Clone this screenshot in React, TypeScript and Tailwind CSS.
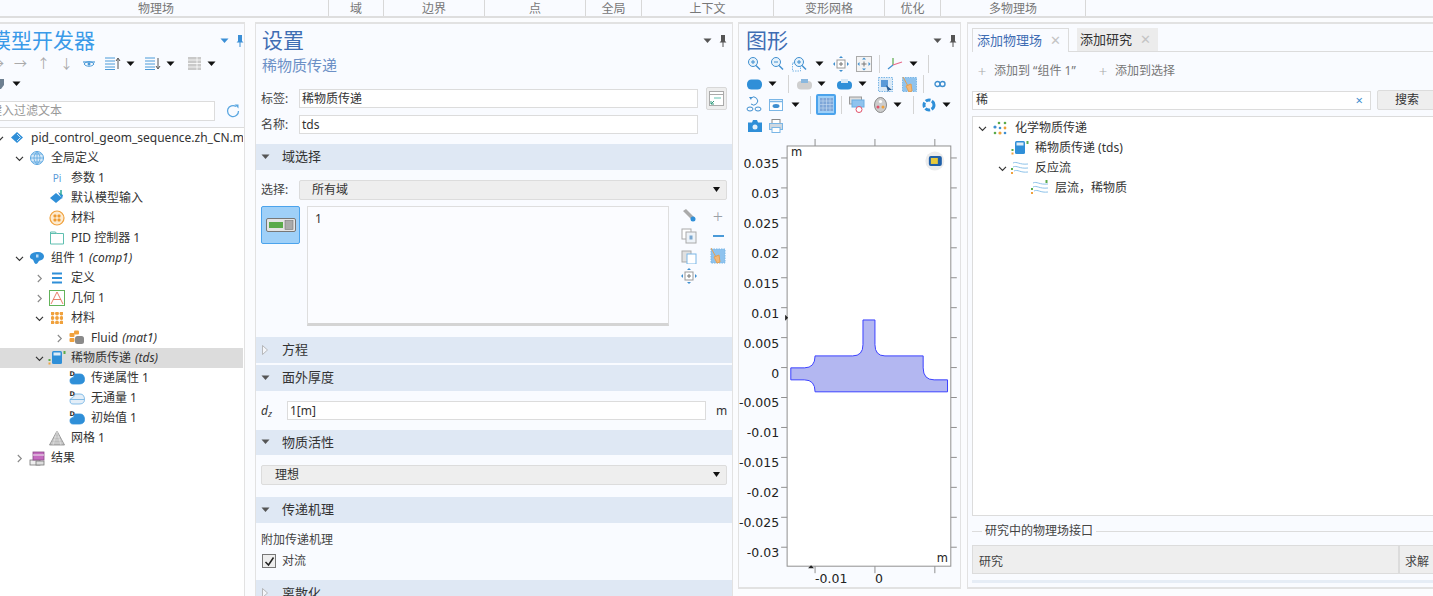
import type { ReactNode } from "react";

const font = "font-['Noto_Sans','Noto_Sans_CJK_SC',sans-serif]";

const ribbon = [
  { label: "物理场", w: "w-[329px]", extra: "pr-4" },
  { label: "域", w: "w-[55px]", extra: "" },
  { label: "边界", w: "w-[101px]", extra: "" },
  { label: "点", w: "w-[101px]", extra: "" },
  { label: "全局", w: "w-[56px]", extra: "" },
  { label: "上下文", w: "w-[132px]", extra: "" },
  { label: "变形网格", w: "w-[111px]", extra: "" },
  { label: "优化", w: "w-[56px]", extra: "" },
  { label: "多物理场", w: "w-[145px]", extra: "" },
];

function Svg({ children, w = 16, h = 16, vb = "0 0 16 16" }: { children: ReactNode; w?: number; h?: number; vb?: string }) {
  return (
    <svg width={w} height={h} viewBox={vb} fill="none" className="shrink-0">
      {children}
    </svg>
  );
}

const Arrow = () => (
  <Svg w={9} h={6} vb="0 0 9 6">
    <path d="M0.5 0.5h8L4.5 5z" fill="#111" />
  </Svg>
);

const PanelMenu = ({ blue }: { blue?: boolean }) => (
  <div className="flex items-center gap-[7px]">
    <Svg w={9} h={6} vb="0 0 9 6">
      <path d="M0.5 0.5h8L4.5 5z" fill={blue ? "#3b8fd6" : "#555"} />
    </Svg>
    <Svg w={8} h={12} vb="0 0 8 12">
      <path d="M2 0h4v6l1.5 1.5h-7L2 6zM3.5 7.5h1V12h-1z" fill={blue ? "#3b8fd6" : "#555"} />
    </Svg>
  </div>
);

const Chevron = ({ open }: { open?: boolean }) => (
  <Svg w={9} h={9} vb="0 0 9 9">
    {open ? (
      <path d="M1 2.8l3.5 3.5L8 2.8" stroke="#333" strokeWidth="1.2" />
    ) : (
      <path d="M2.8 1l3.5 3.5L2.8 8" stroke="#888" strokeWidth="1.1" />
    )}
  </Svg>
);

const DBlob = ({ hollow }: { hollow?: boolean }) => (
  <Svg>
    <path
      d="M6 4h5c3 0 4.500 2 4.500 5.500S13 14 10 14H4C2 14 1 13 1 10.500 1 8 3 8 4 7.500 5 7 5 5 6 4z"
      fill={hollow ? "#e3eef8" : "#2f8fd8"}
      stroke={hollow ? "#6aaee2" : "#2f8fd8"}
      strokeWidth="0.800"
    />
    {hollow && <path d="M1 9.500h14.500" stroke="#6aaee2" strokeWidth="0.800" />}
    <text x="0.500" y="5.500" fontSize="6.500" fontWeight="700" fill="#333" fontFamily="DejaVu Sans, sans-serif">
      D
    </text>
  </Svg>
);

const Dots = ({ small }: { small?: boolean }) => (
  <Svg w={small ? 12 : 16} h={small ? 12 : 16} vb="0 0 12 12">
    {[1.5, 6, 10.5].flatMap((x) => [1.5, 6, 10.5].map((y) => <circle key={`${x}-${y}`} cx={x} cy={y} r="1.900" fill="#f0a13c" />))}
  </Svg>
);

const Chem = () => (
  <Svg w={14} h={14} vb="0 0 14 14">
    <circle cx="2" cy="6" r="1.600" fill="#3f8fd0" />
    <circle cx="6" cy="2" r="1.300" fill="#5aaa4a" />
    <circle cx="12" cy="2" r="1.300" fill="#5aaa4a" />
    <circle cx="7" cy="7" r="1.300" fill="#3f8fd0" />
    <circle cx="12" cy="7" r="1.400" fill="#f0a13c" />
    <circle cx="2" cy="12" r="1.300" fill="#5aaa4a" />
    <circle cx="7" cy="12" r="1.600" fill="#f0a13c" />
    <circle cx="12" cy="12" r="1.300" fill="#3f8fd0" />
  </Svg>
);

const Tds = () => (
  <Svg w={18} h={16} vb="0 0 18 16">
    <rect x="4" y="1" width="10" height="13" rx="1.500" fill="#2f8fd8" />
    <rect x="5.500" y="2.500" width="7" height="3" fill="#dcecf8" />
    <rect x="15.500" y="1" width="2" height="3" fill="#5aaa4a" />
    <rect x="0.500" y="9" width="2" height="2" fill="#5aaa4a" />
    <rect x="0.500" y="12.500" width="2" height="2" fill="#f0a13c" />
  </Svg>
);

const Waves = ({ plus }: { plus?: boolean }) => (
  <Svg w={18} h={16} vb="0 0 18 16">
    <path d="M2 3c4-2 6 2 15 1M2 7c4-2 6 2 15 1M3 11c4-2 6 2 14 1" stroke="#8ec3ea" strokeWidth="1" />
    {plus && <rect x="14.500" y="0" width="2" height="3" fill="#5aaa4a" />}
    <rect x="0" y="8" width="2" height="2" fill="#5aaa4a" />
    <rect x="0" y="12" width="2" height="2" fill="#f0a13c" />
  </Svg>
);

const treeIcons: Record<string, ReactNode> = {
  model: (
    <Svg>
      <path d="M8 2l6 5.500L8 13 2 7.500z" fill="#2f8fd8" />
      <path d="M8 4l3.500 3.500L8 11" stroke="#cfe5f6" strokeWidth="1" />
    </Svg>
  ),
  globe: (
    <Svg>
      <circle cx="8" cy="8" r="6.500" fill="#d6e9f8" stroke="#5aa6e0" />
      <path d="M1.500 8h13M8 1.500v13M3 4h10M3 12h10M8 1.500c-4 4-4 9 0 13M8 1.500c4 4 4 9 0 13" stroke="#5aa6e0" strokeWidth="0.8" />
    </Svg>
  ),
  pi: <span className="text-[10px] leading-none text-[#5a9ad8]">Pi</span>,
  input: (
    <Svg>
      <path d="M7 3l6 5-6 5-6-5z" fill="#2f8fd8" />
      <path d="M9 2l5 3-1 4" fill="#2f8fd8" />
      <path d="M12 0v5" stroke="#2aa89a" strokeWidth="1.500" />
    </Svg>
  ),
  mat: (
    <Svg>
      <circle cx="8" cy="8" r="7" fill="#fdebd0" stroke="#f0a13c" strokeWidth="1.200" />
      <g fill="#ee9a30">
        <rect x="4.500" y="4.500" width="3" height="3" rx="1" />
        <rect x="8.500" y="4.500" width="3" height="3" rx="1" />
        <rect x="4.500" y="8.500" width="3" height="3" rx="1" />
        <rect x="8.500" y="8.500" width="3" height="3" rx="1" />
      </g>
    </Svg>
  ),
  pid: (
    <Svg>
      <path d="M1.500 14V2h5l1 1.500h7V14z" fill="#fff" stroke="#5fbfb0" />
      <path d="M1.500 3.500h6" stroke="#5fbfb0" />
    </Svg>
  ),
  comp: (
    <Svg>
      <path d="M1 6c1-3 4-4 8-4 4 0 6 2 6 4.500S13 10 11 10.500 9 14 7 14c-2 0-2-4-3.500-4.500S0.500 8 1 6z" fill="#2f8fd8" />
      <rect x="7" y="4.500" width="2.500" height="3" fill="#bcdcf5" />
    </Svg>
  ),
  defs: (
    <Svg>
      <path d="M3 3.500h10M3 8h10M3 12.500h10" stroke="#2f8fd8" strokeWidth="1.900" />
    </Svg>
  ),
  geom: (
    <Svg>
      <rect x="0.500" y="0.500" width="15" height="15" fill="#fff" stroke="#62b35a" />
      <path d="M2 14l3-6 3-6 3 6 3 6M4 9.500h8" stroke="#e8705a" strokeWidth="0.900" />
    </Svg>
  ),
  mats: <Dots small />,
  fluid: (
    <Svg>
      <g fill="#f0a13c">
        <rect x="5" y="0.500" width="5" height="4" rx="1" />
        <rect x="0.500" y="3" width="5" height="4" rx="1" />
        <rect x="0.500" y="8" width="5" height="4" rx="1" />
      </g>
      <rect x="6" y="6" width="9" height="8" rx="2.500" fill="#8a8a8a" />
    </Svg>
  ),
  tds: <Tds />,
  d: <DBlob />,
  dh: <DBlob hollow />,
  mesh: (
    <Svg>
      <path d="M8 1l7.500 14H0.500z" fill="#bdbdbd" stroke="#8a8a8a" strokeWidth="0.800" />
      <path d="M5 7h6M3.500 10h9M2 13h12M8 1L4 15M8 1l4 14" stroke="#eee" strokeWidth="0.500" />
    </Svg>
  ),
  res: (
    <Svg w={16} h={15} vb="0 0 16 15">
      <rect x="1" y="9" width="10" height="5" fill="#eee" stroke="#777" strokeWidth="0.800" />
      <rect x="4" y="1" width="11" height="8" fill="#c56ac0" stroke="#8a4a88" strokeWidth="0.800" />
      <path d="M4 4h11" stroke="#eee" />
      <rect x="7" y="10" width="8" height="4" fill="#ddd" stroke="#777" strokeWidth="0.800" />
    </Svg>
  ),
};

const tree = [
  { level: 0, chev: "open", icon: "model", text: "pid_control_geom_sequence.zh_CN.mph" },
  { level: 1, chev: "open", icon: "globe", text: "全局定义" },
  { level: 2, icon: "pi", text: "参数 1" },
  { level: 2, icon: "input", text: "默认模型输入" },
  { level: 2, icon: "mat", text: "材料" },
  { level: 2, icon: "pid", text: "PID 控制器 1" },
  { level: 1, chev: "open", icon: "comp", text: "组件 1", em: "(comp1)" },
  { level: 2, chev: "closed", icon: "defs", text: "定义" },
  { level: 2, chev: "closed", icon: "geom", text: "几何 1" },
  { level: 2, chev: "open", icon: "mats", text: "材料" },
  { level: 3, chev: "closed", icon: "fluid", text: "Fluid", em: "(mat1)" },
  { level: 2, chev: "open", icon: "tds", text: "稀物质传递", em: "(tds)", selected: true },
  { level: 3, icon: "d", text: "传递属性 1" },
  { level: 3, icon: "dh", text: "无通量 1" },
  { level: 3, icon: "d", text: "初始值 1" },
  { level: 2, icon: "mesh", text: "网格 1" },
  { level: 1, chev: "closed", icon: "res", text: "结果" },
];

const indent = ["pl-0", "pl-[20px]", "pl-[40px]", "pl-[60px]"];

function TreeRow({ row }: { row: (typeof tree)[number] }) {
  return (
    <div className={`flex h-[20px] items-center whitespace-nowrap ${indent[row.level]} ${row.selected ? "bg-[#dcdcdc]" : ""}`}>
      <div className="flex w-[14px] shrink-0 justify-center">{row.chev && <Chevron open={row.chev === "open"} />}</div>
      <div className="flex w-[22px] shrink-0 justify-center">{treeIcons[row.icon]}</div>
      <span className="ml-[3px] text-[12px] text-[#333]">
        {row.text}
        {row.em && <em className="ml-[4px]">{row.em}</em>}
      </span>
    </div>
  );
}

function LeftToolbar() {
  return (
    <div className="text-[#aaaaaa]">
      <div className="flex h-[21px] items-center">
        <span className="ml-[-9px] w-[23px] shrink-0 text-[13px] leading-none">→</span>
        <span className="w-[23px] shrink-0 text-[13px] leading-none">→</span>
        <span className="w-[23px] shrink-0 text-[13px] leading-none">↑</span>
        <span className="w-[23px] shrink-0 text-[13px] leading-none">↓</span>
        <div className="w-[22px] shrink-0">
          <Svg w={12} h={10} vb="0 0 12 10">
            <path d="M0 3h12" stroke="#4a9ad8" strokeWidth="1.200" />
            <path d="M1 5c2-3 8-3 10 0-2 3-8 3-10 0z" stroke="#4a9ad8" />
            <circle cx="6" cy="5" r="1.500" fill="#4a9ad8" />
          </Svg>
        </div>
        <div className="flex w-[40px] shrink-0 items-center gap-[5px]">
          <ListIcon up />
          <Arrow />
        </div>
        <div className="flex w-[43px] shrink-0 items-center gap-[5px]">
          <ListIcon />
          <Arrow />
        </div>
        <div className="flex items-center gap-[5px]">
          <Svg w={14} h={13} vb="0 0 14 13">
            <path d="M0 0h13v13H0z" fill="#c9c9c9" />
            <path d="M0 3h13M0 6.500h13M0 10h13M9 0v13" stroke="#fff" strokeWidth="0.800" />
          </Svg>
          <Arrow />
        </div>
      </div>
      <div className="flex h-[20px] items-center gap-[7px]">
        <Svg w={5} h={12} vb="0 0 5 12">
          <path d="M0 1h4v6L1 11H0z" fill="#6d7f90" />
        </Svg>
        <Arrow />
      </div>
    </div>
  );
}

function ListIcon({ up }: { up?: boolean }) {
  return (
    <Svg w={16} h={13} vb="0 0 16 13">
      <path d="M0 1h10M0 4h10M0 7h10M0 10h10M0 12.500h10" stroke="#4a9ad8" strokeWidth="1" />
      <path d={up ? "M13 12V2M11 4l2-3 2 3" : "M13 1v10M11 9l2 3 2-3"} stroke="#555" />
    </Svg>
  );
}

function Section({ title, open = true, cut }: { title: string; open?: boolean; cut?: boolean }) {
  return (
    <div className={`flex ${cut ? "h-[16px] items-start" : "h-[26px] items-center"} bg-[#dfe8f4] text-[13px] text-[#333]`}>
      <div className={`flex w-[26px] justify-center pr-[8px] ${cut ? "mt-[8px]" : ""}`}>
        {open ? (
          <Svg w={9} h={6} vb="0 0 9 6">
            <path d="M0.500 0.500h8L4.500 5z" fill="#555" />
          </Svg>
        ) : (
          <Svg w={6} h={10} vb="0 0 6 10">
            <path d="M0.500 0.500l5 4.500-5 4.500z" fill="#f4f6fa" stroke="#aaa" strokeWidth="0.800" />
          </Svg>
        )}
      </div>
      <span className={cut ? "mt-[4px]" : ""}>{title}</span>
    </div>
  );
}

function Field({ value, className }: { value: string; className: string }) {
  return (
    <div className={`flex shrink-0 items-center border border-[#dcdcdc] bg-white px-[2px] text-[12px] text-[#333] ${className}`}>{value}</div>
  );
}

function Select({ value, className }: { value: string; className: string }) {
  return (
    <div className={`flex h-[20px] shrink-0 items-center justify-between rounded-[2px] border border-[#dcdcdc] bg-[#eeeeee] pr-[6px] text-[12px] text-[#333] ${className}`}>
      <span>{value}</span>
      <Svg w={7} h={5} vb="0 0 7 5">
        <path d="M0 0h7L3.500 5z" fill="#111" />
      </Svg>
    </div>
  );
}

function SettingsPanel() {
  return (
    <div className="flex h-[574px] w-[478px] shrink-0 flex-col overflow-hidden border-x border-t-2 border-[#e2e2e2] bg-[#f9fbff]">
      <div className="flex items-start justify-between pl-[6px] pr-[5px]">
        <div className="h-[31px] text-[21px] leading-[33px] tracking-[0px] text-[#3f6db3]">设置</div>
        <div className="mt-[11px]">
          <PanelMenu />
        </div>
      </div>
      <div className="h-[20px] pl-[6px] text-[15px] leading-[20px] text-[#6c90c6]">稀物质传递</div>
      <div className="mt-[11px] flex h-[27px] items-center pl-[5px]">
        <span className="w-[38px] text-[12px] text-[#444]">标签:</span>
        <Field value="稀物质传递" className="h-[19px] w-[399px]" />
        <div className="ml-[8px] flex h-[23px] w-[21px] items-center justify-center rounded-[2px] border border-[#d8d8d8] bg-[#eee]">
          <Svg w={15} h={15} vb="0 0 15 15">
            <rect x="0.500" y="0.500" width="14" height="14" fill="#fff" stroke="#aaa" />
            <path d="M0.500 3.500h14" stroke="#aaa" />
            <path d="M5 7h7" stroke="#63c0b0" />
            <path d="M2 13l3-3M2 10v3h3" stroke="#2e9a7a" />
          </Svg>
        </div>
      </div>
      <div className="flex h-[27px] items-center pl-[5px]">
        <span className="w-[38px] text-[12px] text-[#444]">名称:</span>
        <Field value="tds" className="h-[19px] w-[399px]" />
      </div>
      <div className="mt-[6px]">
        <Section title="域选择" />
      </div>
      <div className="mt-[10px] flex h-[20px] items-center pl-[5px]">
        <span className="w-[38px] text-[12px] text-[#444]">选择:</span>
        <Select value="所有域" className="w-[428px] pl-[12px]" />
      </div>
      <div className="mt-[6px] flex pl-[5px]">
        <div className="flex h-[38px] w-[39px] shrink-0 items-center justify-center rounded-[2px] border border-[#4ba3ec] bg-[#9fd0f8]">
          <Svg w={30} h={14} vb="0 0 30 14">
            <rect x="0.500" y="0.500" width="29" height="13" rx="1.500" fill="#e4e4e4" stroke="#777" />
            <rect x="3" y="4" width="14" height="6" fill="#5aaa4a" />
            <rect x="19" y="2.500" width="8" height="9" fill="#aaa" stroke="#777" strokeWidth="0.600" />
          </Svg>
        </div>
        <div className="ml-[7px] h-[120px] w-[362px] shrink-0 border border-b-[3px] border-[#dedede] border-b-[#d4d4d4] bg-[#fbfcff] pl-[7px] pt-[3px] text-[12px] text-[#333]">
          1
        </div>
        <div className="ml-[10px] grid h-[80px] shrink-0 grid-cols-[20px_38px] grid-rows-4 place-items-center">
          <Svg>
            <path d="M2 3l3-2 8 8-3 2z" fill="#aaa" />
            <circle cx="12" cy="11" r="2.500" fill="#2f8fd8" />
          </Svg>
          <span className="text-[18px] font-light leading-none text-[#9aa0a6]">+</span>
          <Svg>
            <rect x="1" y="1" width="9" height="10" fill="#fff" stroke="#aaa" />
            <rect x="5" y="4" width="10" height="11" fill="#eef3f8" stroke="#aaa" />
            <rect x="8.500" y="7.500" width="3" height="4" fill="#7aa7d0" />
          </Svg>
          <div className="h-[2px] w-[11px] bg-[#4a9ad8]" />
          <Svg>
            <rect x="1" y="3" width="9" height="11" fill="#e0e0e0" stroke="#aaa" />
            <rect x="6" y="6" width="9" height="10" fill="#fff" stroke="#7ab6e6" />
          </Svg>
          <Svg>
            <rect x="1" y="1" width="14" height="14" fill="#8fc3ee" stroke="#7ab6e6" strokeDasharray="1.500 1" />
            <path d="M1 0l5 9M4 9l5-2 1 7-3 1z" stroke="#e8a050" fill="#f2b878" />
          </Svg>
          <MoveIcon />
        </div>
      </div>
      <div className="mt-[11px]">
        <Section title="方程" open={false} />
      </div>
      <div className="mt-[2px]">
        <Section title="面外厚度" />
      </div>
      <div className="flex h-[41px] items-center pl-[5px] pt-[1px] text-[12px] text-[#333]">
        <span className="w-[26px] italic">
          d<sub className="text-[9px]">z</sub>
        </span>
        <Field value="1[m]" className="h-[19px] w-[419px]" />
        <span className="ml-[10px]">m</span>
      </div>
      <Section title="物质活性" />
      <div className="pl-[5px] pt-[10px]">
        <Select value="理想" className="w-[466px] pl-[13px]" />
      </div>
      <div className="mt-[12px]">
        <Section title="传递机理" />
      </div>
      <div className="mt-[8px] h-[22px] pl-[5px] text-[12px] leading-[18px] text-[#444]">附加传递机理</div>
      <div className="flex h-[20px] items-center pl-[6px] text-[12px] text-[#444]">
        <div className="flex h-[14px] w-[14px] items-center justify-center border border-[#777] bg-[#eee]">
          <Svg w={11} h={11} vb="0 0 11 11">
            <path d="M1.500 6l3 3 5-7.500" stroke="#222" strokeWidth="1.500" />
          </Svg>
        </div>
        <span className="ml-[6px]">对流</span>
      </div>
      <div className="mt-[9px]">
        <Section title="离散化" open={false} cut />
      </div>
    </div>
  );
}

function MoveIcon() {
  return (
    <Svg>
      <rect x="4" y="4" width="8" height="8" fill="#fff" stroke="#999" />
      <path d="M8 6v4M6 8h4" stroke="#777" />
      <path d="M8 0l2 2H6zM8 16l2-2H6zM0 8l2-2v4zM16 8l-2-2v4z" fill="#3f8fd0" />
    </Svg>
  );
}

function ZoomIcon({ minus, box }: { minus?: boolean; box?: boolean }) {
  return (
    <Svg>
      {box && <rect x="0.500" y="7" width="8" height="8" stroke="#7ab6e6" strokeDasharray="1.500 1" />}
      <circle cx="7" cy="6" r="4.500" fill="#e8f3fb" stroke="#3f8fd0" />
      <path d="M10 9.500l4 4" stroke="#3f8fd0" strokeWidth="1.500" />
      <path d="M5 6h4" stroke="#3f8fd0" />
      {!minus && <path d="M7 4v4" stroke="#3f8fd0" />}
    </Svg>
  );
}

const Sep = () => <div className="h-[18px] w-px shrink-0 bg-[#d4d4d4]" />;

function Blob() {
  return (
    <Svg w={15} h={11} vb="0 0 15 11">
      <rect x="0" y="0.500" width="15" height="10" rx="4.500" fill="#2f8fd8" />
    </Svg>
  );
}

function GraphicsToolbar() {
  return (
    <div className="pl-[7px]">
      <div className="flex h-[21px] items-center">
        <div className="w-[23px]"><ZoomIcon /></div>
        <div className="w-[23px]"><ZoomIcon minus /></div>
        <div className="flex w-[41px] items-center gap-[7px]"><ZoomIcon box /><Arrow /></div>
        <div className="w-[23px]"><MoveIcon /></div>
        <div className="w-[23px]">
          <Svg>
            <rect x="0.500" y="0.500" width="15" height="15" fill="#f4f4f4" stroke="#aaa" />
            <path d="M8 5.500v5M5.500 8h5" stroke="#777" />
            <path d="M1.500 8l2-2v4zM14.500 8l-2-2v4zM8 1.500l2 2H6zM8 14.500l2-2H6z" fill="#3f8fd0" />
          </Svg>
        </div>
        <Sep />
        <div className="ml-[6px] flex w-[42px] items-center gap-[5px]">
          <Svg w={18} h={16} vb="0 0 18 16">
            <path d="M7 9V2" stroke="#5aaa4a" strokeWidth="1.200" />
            <path d="M7 9l9-3" stroke="#e86a8a" strokeWidth="1.200" />
            <path d="M7 9l-5 4" stroke="#3f8fd0" strokeWidth="1.200" />
          </Svg>
          <Arrow />
        </div>
        <Sep />
      </div>
      <div className="flex h-[20px] items-center">
        <div className="ml-[1px] flex w-[41px] items-center gap-[6px]"><Blob /><Arrow /></div>
        <Sep />
        <div className="ml-[8px] flex w-[40px] items-center gap-[5px]">
          <Svg w={15} h={11} vb="0 0 15 11">
            <rect y="2" width="15" height="8.500" rx="4" fill="#cfcfcf" />
            <rect x="4" y="0" width="7" height="4" fill="#8ab8df" />
          </Svg>
          <Arrow />
        </div>
        <div className="flex w-[41px] items-center gap-[6px]">
          <Svg w={15} h={11} vb="0 0 15 11">
            <rect y="2" width="15" height="8.500" rx="4" fill="#2f8fd8" />
            <rect x="4" y="0" width="7" height="4" fill="#d7e8f6" />
          </Svg>
          <Arrow />
        </div>
        <div className="w-[24px]">
          <Svg w={15} h={15} vb="0 0 15 15">
            <rect x="0.500" y="0.500" width="14" height="14" fill="#dbeaf7" stroke="#7ab6e6" strokeDasharray="1.500 1" />
            <rect x="3" y="3" width="7" height="7" fill="#5a9ad8" />
            <path d="M8 8l6 5-3 0-1 2z" fill="#2a5f96" />
          </Svg>
        </div>
        <div className="w-[21px]">
          <Svg w={15} h={15} vb="0 0 15 15">
            <rect x="0.500" y="0.500" width="14" height="14" fill="#8fc3ee" stroke="#7ab6e6" strokeDasharray="1.500 1" />
            <path d="M1 0l5 9M4 9l5-2 1 7-3 1z" stroke="#e8a050" fill="#f2b878" />
          </Svg>
        </div>
        <Sep />
        <div className="ml-[10px]">
          <Svg w={12} h={8} vb="0 0 12 8">
            <circle cx="3.500" cy="4" r="2.500" stroke="#3f8fd0" strokeWidth="1.400" />
            <circle cx="8.500" cy="4" r="2.500" stroke="#3f8fd0" strokeWidth="1.400" />
          </Svg>
        </div>
      </div>
      <div className="flex h-[21px] items-center">
        <div className="w-[23px]">
          <Svg w={16} h={17} vb="0 0 16 17">
            <path d="M5 2a4 4 0 1 1 0 6" stroke="#3f8fd0" />
            <path d="M3 1l3 0-1 3z" fill="#3f8fd0" />
            <ellipse cx="4" cy="13" rx="3" ry="2" stroke="#3f8fd0" />
            <ellipse cx="12" cy="13" rx="3" ry="2" stroke="#3f8fd0" />
          </Svg>
        </div>
        <div className="flex w-[41px] items-center gap-[8px]">
          <Svg w={14} h={12} vb="0 0 14 12">
            <rect x="0.500" y="0.500" width="13" height="11" fill="#fff" stroke="#7ab6e6" />
            <path d="M0.500 2.500h13" stroke="#7ab6e6" strokeWidth="1.500" />
            <ellipse cx="7" cy="7" rx="3.500" ry="2" fill="#3f8fd0" />
          </Svg>
          <Arrow />
        </div>
        <Sep />
        <div className="ml-[5px] mr-[5px] flex h-[21px] w-[20px] items-center justify-center rounded-[2px] border-2 border-[#4ba3ec] bg-[#9fd0f8]">
          <Svg w={13} h={13} vb="0 0 13 13">
            <rect width="13" height="13" fill="#7ea6d8" />
            <path d="M3 0v13M6.500 0v13M10 0v13M0 3h13M0 6.500h13M0 10h13" stroke="#c8dcf2" strokeWidth="0.600" />
          </Svg>
        </div>
        <Sep />
        <div className="ml-[7px] w-[25px]">
          <Svg w={17} h={17} vb="0 0 17 17">
            <rect x="0.500" y="1" width="12" height="7" fill="#ddd" stroke="#999" />
            <rect x="3" y="4" width="12" height="7" fill="#8fc3ee" stroke="#6aaee2" />
            <circle cx="10" cy="13.500" r="3" fill="#fff" stroke="#e0506a" />
          </Svg>
        </div>
        <div className="flex w-[39px] items-center gap-[6px]">
          <Svg w={13} h={16} vb="0 0 13 16">
            <ellipse cx="6.500" cy="8" rx="6" ry="7.500" fill="#ccc" stroke="#888" />
            <circle cx="6.500" cy="4.500" r="1.600" fill="#fff" />
            <circle cx="4" cy="10" r="1.500" fill="#e0506a" />
            <circle cx="9" cy="10" r="1.500" fill="#f0a13c" />
          </Svg>
          <Arrow />
        </div>
        <Sep />
        <div className="ml-[8px] flex items-center gap-[6px]">
          <Svg w={14} h={14} vb="0 0 14 14">
            <circle cx="7" cy="7" r="5" stroke="#2f8fd8" strokeWidth="3" strokeDasharray="5 1.500" />
          </Svg>
          <Arrow />
        </div>
      </div>
      <div className="ml-[2px] flex h-[21px] items-center gap-[7px]">
        <Svg w={14} h={12} vb="0 0 14 12">
          <path d="M0 2.500h4L5 0h4l1 2.500h4V12H0z" fill="#2f8fd8" />
          <circle cx="7" cy="7" r="2.500" fill="#e4f0fa" />
        </Svg>
        <Svg w={14} h={14} vb="0 0 14 14">
          <rect x="3" y="0.500" width="8" height="4" fill="#fff" stroke="#888" />
          <rect x="0.500" y="4.500" width="13" height="6" fill="#cfd8e0" stroke="#7ab6e6" />
          <rect x="3" y="8.500" width="8" height="5" fill="#fff" stroke="#7ab6e6" />
        </Svg>
      </div>
    </div>
  );
}

const yTicks = [
  ["0.035", 158], ["0.03", 188], ["0.025", 218], ["0.02", 248], ["0.015", 278], ["0.01", 308], ["0.005", 338],
  ["0", 368], ["-0.005", 398], ["-0.01", 428], ["-0.015", 458], ["-0.02", 488], ["-0.025", 518], ["-0.03", 548],
] as const;
const xTicks = [815, 875, 935];

function Plot() {
  return (
    <svg width="221" height="450" viewBox="739 138 221 450" className="block" fontFamily="DejaVu Sans, sans-serif" fontSize="12.5" fill="#222">
      <rect x="787" y="146" width="164" height="421" fill="#fff" stroke="#909090" strokeWidth="1" />
      {yTicks.map(([label, y]) => (
        <g key={label}>
          <path d={`M781 ${y}h6M951 ${y}h6`} stroke="#909090" />
          <text x="779" y={y + 10} textAnchor="end">{label}</text>
        </g>
      ))}
      {xTicks.map((x) => (
        <path key={x} d={`M${x} 139v7M${x} 567v7`} stroke="#909090" />
      ))}
      <text x="815" y="584">-0.01</text>
      <text x="875" y="584">0</text>
      <text x="791" y="156" fontSize="11.5">m</text>
      <text x="937" y="563" fontSize="11.5">m</text>
      <path d="M785 315l3 3-3 3z" fill="#222" />
      <path d="M808 569l3-3 3 3z" fill="#222" />
      <path
        d="M790.700 368.300H804.300Q815 368.300 815 356.300H852.700Q863 356.300 863 345V320.300H875V345Q875 356.300 885 356.300H923.300V368.300Q923.300 380.300 934.300 380.300H947.700V392.300H815Q815 380.300 804.300 380.300H790.700Z"
        fill="#b3b7f1"
        stroke="#3a40ff"
        strokeWidth="1"
      />
      <circle cx="935" cy="161" r="9.500" fill="#ececec" />
      <rect x="929" y="156" width="13" height="10" rx="2" fill="#1f5fa8" />
      <rect x="931" y="158" width="7" height="6" fill="#e8c93a" />
    </svg>
  );
}

function GraphicsPanel() {
  return (
    <div className="flex h-[567px] w-[223px] shrink-0 flex-col border-x border-y-2 border-[#e2e2e2] bg-[#f9fbff]">
      <div className="flex h-[29px] items-start justify-between pl-[7px] pr-[3px]">
        <div className="text-[21px] leading-[33px] text-[#3f6db3]">图形</div>
        <div className="mt-[11px]"><PanelMenu /></div>
      </div>
      <div className="h-[85px]"><GraphicsToolbar /></div>
      <Plot />
    </div>
  );
}

const physics = [
  { pl: "pl-0", chev: true, icon: <Chem />, text: "化学物质传递" },
  { pl: "pl-[20px]", icon: <Tds />, text: "稀物质传递 (tds)" },
  { pl: "pl-[20px]", chev: true, icon: <Waves />, text: "反应流" },
  { pl: "pl-[40px]", icon: <Waves plus />, text: "层流，稀物质" },
];

function AddPanel() {
  return (
    <div className="ml-[1px] flex h-[567px] min-w-0 flex-1 flex-col overflow-hidden border-y-2 border-l border-[#e2e2e2] bg-[#f9fbff] pl-[4px]">
      <div className="mt-[4px] flex h-[24px] items-end border-b border-[#dcdcdc] text-[13px]">
        <div className="mb-[-1px] flex h-[24px] w-[97px] items-center gap-[8px] border border-b-0 border-[#dcdcdc] bg-[#f9fbff] pl-[4px] text-[#3f6db3]">
          添加物理场
          <span className="text-[13px] leading-none text-[#c4c4c4]">✕</span>
        </div>
        <div className="ml-[8px] flex h-[23px] w-[81px] items-center gap-[8px] bg-[#ececec] pl-[3px] text-[#333]">
          添加研究
          <span className="text-[13px] leading-none text-[#c4c4c4]">✕</span>
        </div>
      </div>
      <div className="flex h-[38px] items-center pl-[4px] text-[12px] text-[#777]">
        <span className="w-[12px] text-center text-[15px] font-light text-[#aaa]">+</span>
        <span className="ml-[6px] w-[103px] whitespace-pre">添加到 “组件 1”</span>
        <span className="w-[12px] text-center text-[15px] font-light text-[#aaa]">+</span>
        <span className="ml-[6px]">添加到选择</span>
      </div>
      <div className="flex items-center">
        <div className="flex h-[19px] w-[399px] shrink-0 items-center justify-between border border-[#dcdcdc] bg-white pl-[3px] pr-[7px] text-[12px] text-[#333]">
          稀
          <span className="text-[13px] leading-none text-[#3f8fd0]">×</span>
        </div>
        <div className="ml-[6px] flex h-[20px] w-[60px] shrink-0 items-center justify-center rounded-[2px] border border-[#dcdcdc] bg-[#eee] text-[12px] text-[#333]">
          搜索
        </div>
      </div>
      <div className="mt-[6px] h-[400px] border-y border-l border-[#dcdcdc] bg-white pl-[2px] pt-[1px]">
        {physics.map((row) => (
          <div key={row.text} className={`flex h-[20px] items-center ${row.pl} text-[12px] text-[#333]`}>
            <div className="flex w-[14px] justify-center">{row.chev && <Chevron open />}</div>
            <div className="flex w-[22px] justify-center">{row.icon}</div>
            <span className="ml-[4px]">{row.text}</span>
          </div>
        ))}
      </div>
      <div className="mt-[7px] flex h-[16px] items-center text-[12px] text-[#444]">
        <div className="h-px w-[10px] bg-[#dcdcdc]" />
        <span className="mx-[3px]">研究中的物理场接口</span>
        <div className="h-px flex-1 bg-[#dcdcdc]" />
      </div>
      <div className="mt-[6px] flex h-[29px] border-y border-l border-[#dcdcdc] bg-[#eeeeee] text-[12px] text-[#444]">
        <div className="flex w-[427px] items-center border-r-2 border-[#dcdcdc] pl-[6px] pt-[5px]">研究</div>
        <div className="flex items-center pl-[5px] pt-[5px]">求解</div>
      </div>
      <div className="mt-[6px] h-[3px] bg-[#e6edf6]" />
    </div>
  );
}

export default function App() {
  return (
    <div className={`flex h-[596px] w-[1433px] flex-col overflow-hidden bg-[#fbfcfe] ${font}`}>
      <div className="flex h-[18px] shrink-0 border-b-2 border-[#dedede] bg-[#f9fbff]">
        {ribbon.map((r) => (
          <div key={r.label} className={`flex h-[16px] items-center justify-center border-r border-[#d8d8d8] pt-[1px] text-[12px] text-[#777] ${r.w} ${r.extra}`}>
            {r.label}
          </div>
        ))}
      </div>
      <div className="mt-[4px] flex gap-[5px]">
        <div className="mr-[5px] h-[574px] w-[245px] shrink-0 overflow-hidden border-r border-t-2 border-[#e2e2e2] bg-[#f9fbff]">
          <div className="flex items-start justify-between">
            <div className="ml-[-10px] h-[29px] whitespace-nowrap text-[21px] leading-[33px] text-[#3a9ae8]">模型开发器</div>
            <div className="mt-[11px]"><PanelMenu blue /></div>
          </div>
          <LeftToolbar />
          <div className="mt-[7px] flex items-center">
            <div className="ml-[-1px] flex h-[20px] w-[216px] items-center overflow-hidden border border-[#dcdcdc] bg-white text-[12px] text-[#999]">
              <span className="ml-[-10px] whitespace-nowrap">键入过滤文本</span>
            </div>
            <div className="ml-[11px]">
              <Svg w={14} h={14} vb="0 0 14 14">
                <path d="M12.500 7A5.500 5.500 0 1 1 10 2.500" stroke="#5aa6e0" strokeWidth="1.300" />
                <path d="M8.500 0.500h4v4z" fill="#5aa6e0" />
              </Svg>
            </div>
          </div>
          <div className="mt-[6px] h-[480px] overflow-hidden border-t border-[#dcdcdc] bg-white">
            <div className="ml-[-8px] w-[251px] overflow-hidden">
              {tree.map((row) => (
                <TreeRow key={`${row.icon}-${row.text}`} row={row} />
              ))}
            </div>
          </div>
        </div>
        <SettingsPanel />
        <GraphicsPanel />
        <AddPanel />
      </div>
    </div>
  );
}
